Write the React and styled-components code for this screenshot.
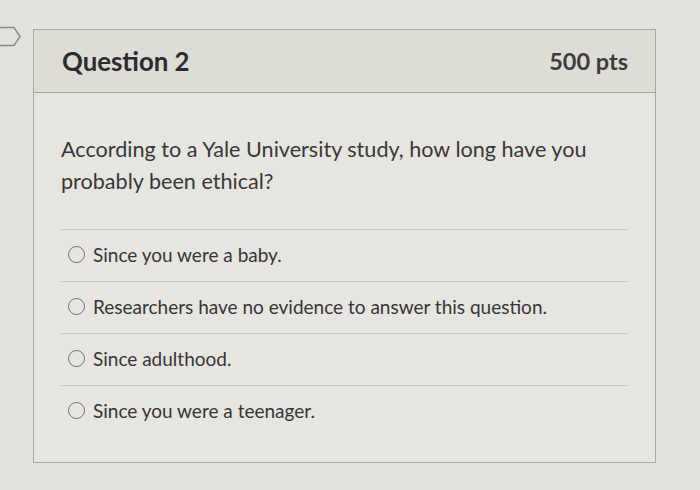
import React from 'react';
import styled, { createGlobalStyle } from 'styled-components';

const GlobalStyle = createGlobalStyle`
  body {
    margin: 0;
    background: #e3e2dc;
    font-family: Lato, "Open Sans", "Liberation Sans", sans-serif;
  }
`;

const Page = styled.div`
  position: relative;
  width: 700px;
  height: 490px;
  padding: 29px 0 0 33px;
  box-sizing: border-box;
`;

const Flag = styled.svg`
  position: absolute;
  left: 0;
  top: 26px;
`;

const Card = styled.div`
  width: 623px;
  height: 434px;
  box-sizing: border-box;
  border: 1px solid #a9a8a2;
  background: #e6e5df;
`;

const Header = styled.div`
  display: flex;
  align-items: center;
  justify-content: space-between;
  height: 63px;
  box-sizing: border-box;
  padding: 0 27px 0 28px;
  background: #dddcd5;
  border-bottom: 1px solid #a3a29c;
`;

const Title = styled.h2`
  margin: 0;
  font-size: 25.8px;
  font-weight: 700;
  color: #2b2b30;
`;

const Points = styled.span`
  font-size: 23.5px;
  font-weight: 700;
  color: #3c3c3e;
`;

const Body = styled.div`
  padding: 40px 27px 0 27px;
`;

const Prompt = styled.p`
  margin: 0 0 32px;
  font-size: 21.6px;
  line-height: 32px;
  color: #38383a;
`;

const Answer = styled.label`
  display: flex;
  align-items: center;
  gap: 8px;
  height: 52px;
  padding-left: 7px;
  padding-bottom: 2px;
  box-sizing: border-box;
  border-top: 1px solid #c8c7c1;
  font-size: 19px;
  color: #363638;
`;

const Radio = styled.span`
  width: 15px;
  height: 15px;
  border: 1.5px solid #6d6d6f;
  border-radius: 50%;
  flex: none;
`;

const answers = [
  'Since you were a baby.',
  'Researchers have no evidence to answer this question.',
  'Since adulthood.',
  'Since you were a teenager.',
];

export default function App() {
  return (
    <Page>
      <GlobalStyle />
      <Flag width="22" height="22" viewBox="0 0 22 22">
        <path d="M-2 1.5 H14 L20 10.5 L14 19.5 H-2" fill="none" stroke="#8a8a8a" strokeWidth="1.5" />
      </Flag>
      <Card>
        <Header>
          <Title>Question 2</Title>
          <Points>500 pts</Points>
        </Header>
        <Body>
          <Prompt>
            According to a Yale University study, how long have you
            <br />
            probably been ethical?
          </Prompt>
          {answers.map(a => (
            <Answer key={a}>
              <Radio />
              {a}
            </Answer>
          ))}
        </Body>
      </Card>
    </Page>
  );
}
